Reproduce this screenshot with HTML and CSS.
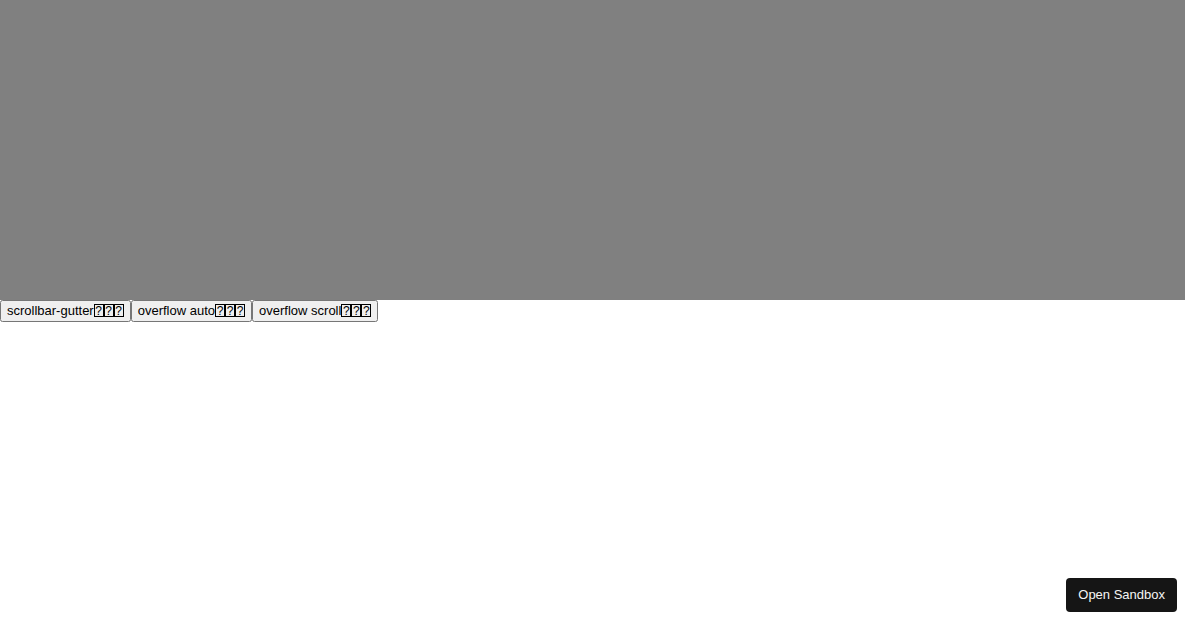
FILE: index.html
```
<!DOCTYPE html>
<html lang="ja">
<head>
    <meta charset="UTF-8">
    <meta name="viewport" content="width=device-width, initial-scale=1.0">
    <title>scrollbar-gutter</title>
    <link rel="stylesheet" href="styles.css">
</head>
<body>
    <div class="content">
        <div class="hero"></div>
        <div class="buttons">
            <button type="button" class="btn">scrollbar-gutter<span class="box">?</span><span class="box">?</span><span class="box">?</span></button>
            <button type="button" class="btn">overflow auto<span class="box">?</span><span class="box">?</span><span class="box">?</span></button>
            <button type="button" class="btn">overflow scroll<span class="box">?</span><span class="box">?</span><span class="box">?</span></button>
        </div>
    </div>

    <button type="button" class="sandbox-btn">Open Sandbox</button>
</body>
</html>
```

FILE: styles.css
```
body {
    font-family: "Liberation Sans", Arial, sans-serif;
    background-color: #fff;
    margin: 0;
    padding-right: 15px;
}

.hero {
    height: 300px;
    background-color: #808080;
}

.buttons {
    display: flex;
}

.btn {
    display: flex;
    align-items: center;
    height: 22px;
    padding: 0 5px 1px;
    font-family: "Liberation Sans", Arial, sans-serif;
    font-size: 13px;
}

.box {
    box-sizing: border-box;
    width: 10px;
    height: 13px;
    border: 1px solid #000;
    font-size: 12px;
    line-height: 12px;
    display: flex;
    justify-content: center;
}

.sandbox-btn {
    position: fixed;
    right: 23px;
    bottom: 18px;
    padding: 0 12px;
    border: none;
    border-radius: 4px;
    background-color: #151515;
    color: #f5f5f5;
    font-family: "Liberation Sans", Arial, sans-serif;
    font-size: 13px;
    line-height: 34px;
}
```
